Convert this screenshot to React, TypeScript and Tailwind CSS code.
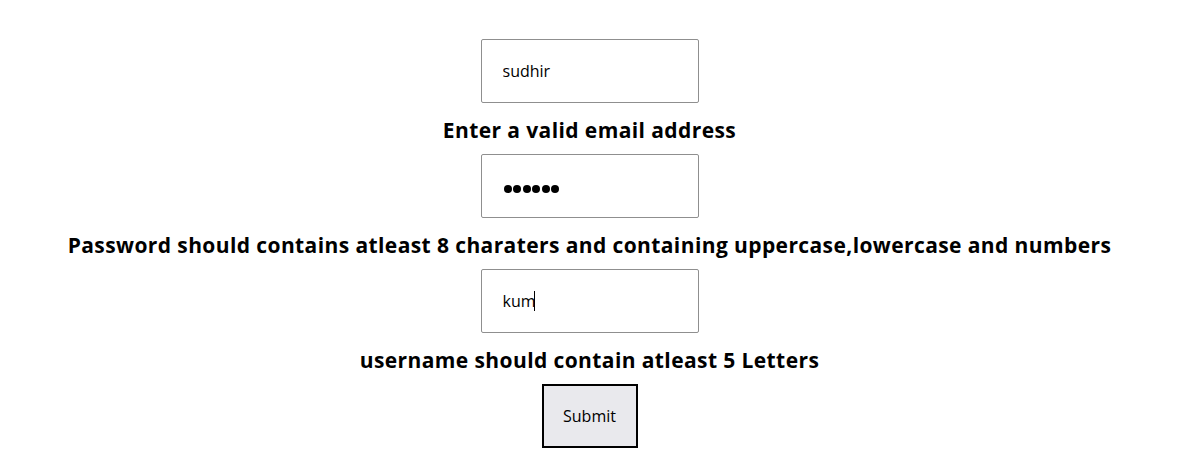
import React from 'react';

const Field: React.FC<{ value: string; dots?: number; caret?: boolean }> = ({ value, dots, caret }) => (
    <div className="relative w-[218px] h-[64px]">
        <input
            type="text"
            value={dots ? '' : value}
            readOnly
            className="w-full h-full border border-[#8f8f8f] rounded-[2px] bg-white pl-[21px] text-[16px] text-black outline-none"
        />
        {dots && (
            <div className="absolute left-[23px] top-[31px] flex gap-[1.6px]">
                {Array.from({ length: dots }).map((_, i) => (
                    <span key={i} className="w-[8px] h-[8px] rounded-full bg-black" />
                ))}
            </div>
        )}
        {caret && <span className="absolute left-[53px] top-[22px] w-px h-[20px] bg-black" />}
    </div>
);

const Hint: React.FC<{ children: React.ReactNode }> = ({ children }) => (
    <h3 className="mt-[14px] mb-[10px] text-[21px] leading-[27px] font-bold tracking-[0.4px] text-black text-center whitespace-nowrap">{children}</h3>
);

export default function App() {
    return (
        <div className="w-[1179px] min-h-[458px] bg-white flex flex-col items-center pt-[39px]" style={{ fontFamily: '"Open Sans", "Noto Sans", sans-serif' }}>
            <Field value="sudhir" />
            <Hint>Enter a valid email address</Hint>
            <Field value="" dots={6} />
            <Hint>Password should contains atleast 8 charaters and containing uppercase,lowercase and numbers</Hint>
            <Field value="kum" caret />
            <Hint>username should contain atleast 5 Letters</Hint>
            <button className="w-[96px] h-[64px] border-2 border-black bg-[#e9e9ed] text-[16px] text-black">Submit</button>
        </div>
    );
}
